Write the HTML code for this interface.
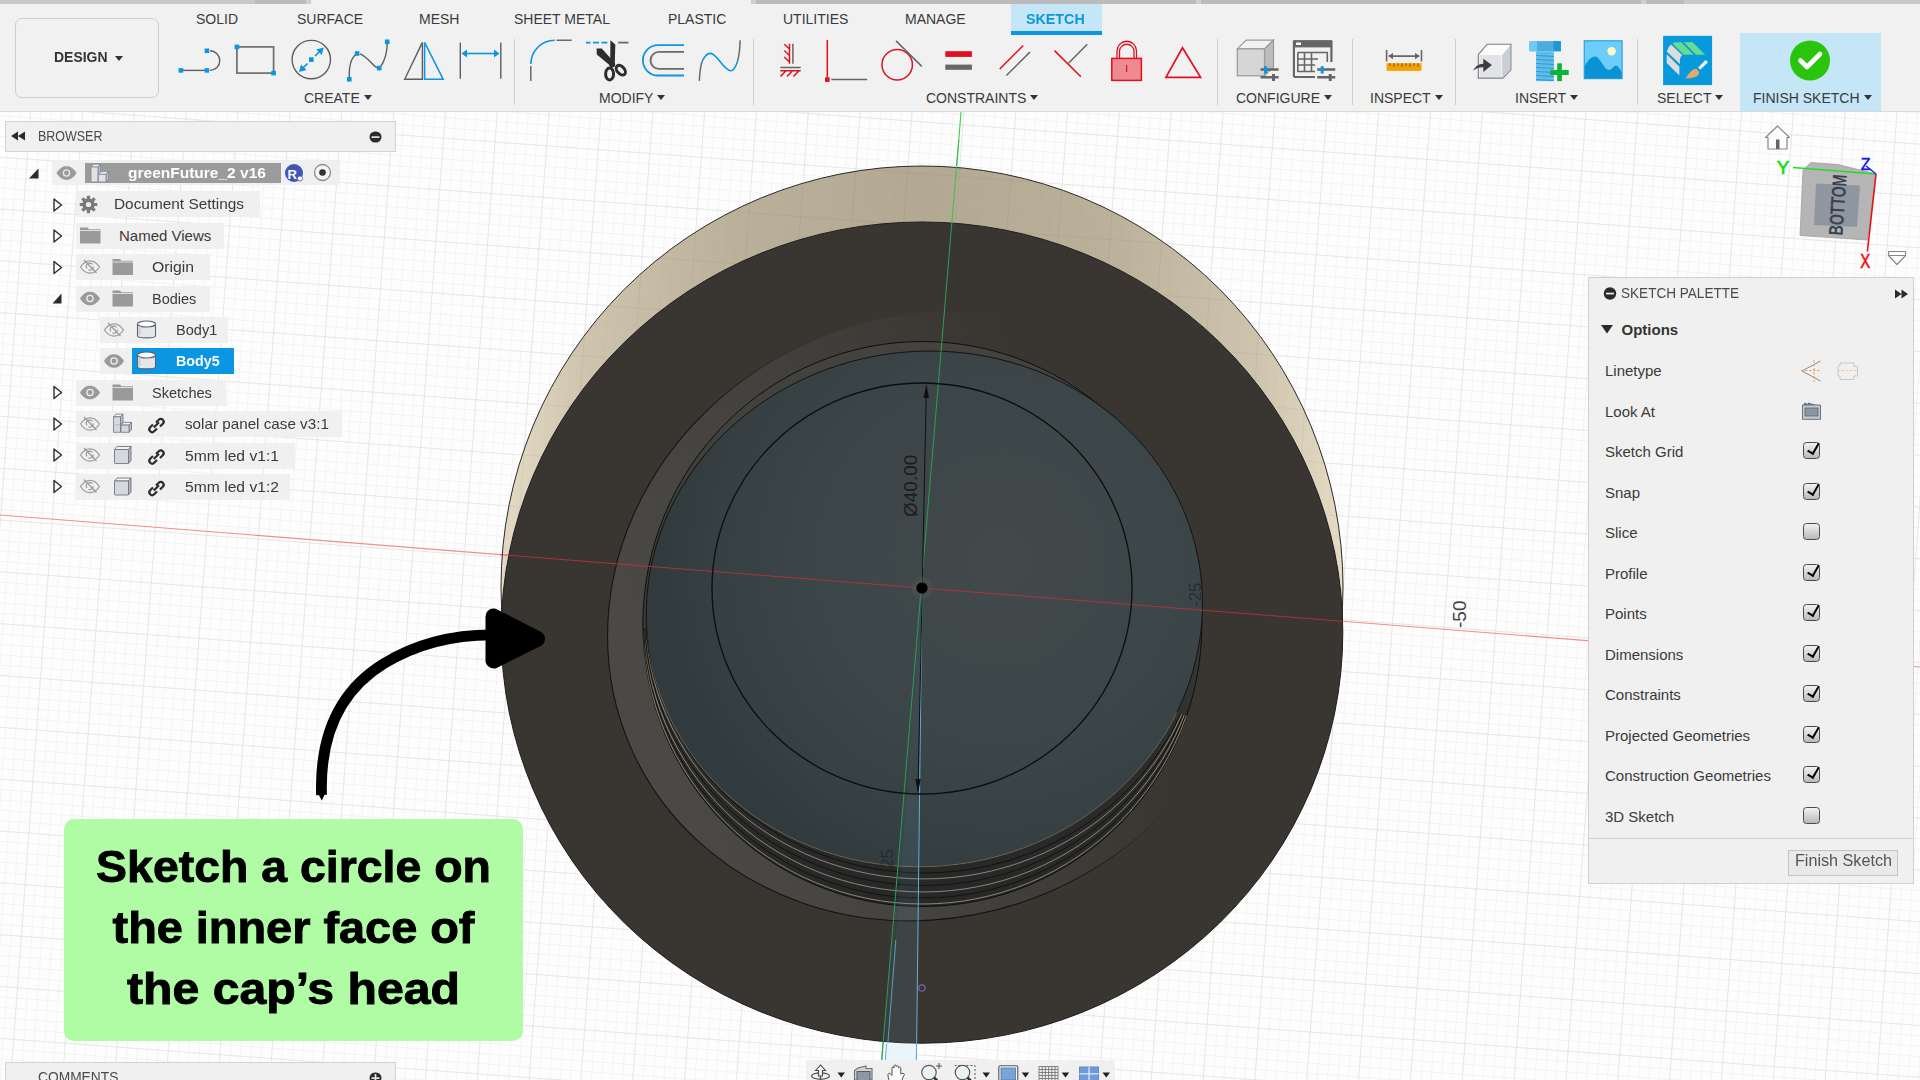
<!DOCTYPE html>
<html><head><meta charset="utf-8">
<style>
*{margin:0;padding:0;box-sizing:border-box}
html,body{width:1920px;height:1080px;overflow:hidden;background:#fdfdfd;font-family:"Liberation Sans",sans-serif;color:#3c3c3c}
.abs{position:absolute}
#scene{position:absolute;left:0;top:0}
#tb{position:absolute;left:0;top:0;width:1920px;height:112px;background:#f1f1f1;border-bottom:1px solid #d9d9d9}
.strip{position:absolute;top:0;height:4px}
.tab{position:absolute;top:11px;font-size:14px;color:#3a3a3a;white-space:nowrap;letter-spacing:0}
.grp{position:absolute;top:90px;font-size:14px;color:#3a3a3a;white-space:nowrap}
.sep{position:absolute;top:39px;width:1px;height:66px;background:#cfcfcf}
.caret{display:inline-block;width:0;height:0;border-left:4px solid transparent;border-right:4px solid transparent;border-top:5px solid #333;vertical-align:middle;margin-left:4px;position:relative;top:-2px}
.panel{position:absolute;background:#f0f0f0;border:1px solid #d6d6d6}
.row{position:absolute;height:26px;background:rgba(239,239,239,0.94)}
.txt{position:absolute;font-size:15px;color:#3a3a3a;white-space:nowrap}
.pal{position:absolute;left:1605px;font-size:15px;color:#3a3a3a;white-space:nowrap}
.cb{position:absolute;left:1803px;width:17px;height:17px;border:1.2px solid #4a4a4a;border-radius:3.5px;background:linear-gradient(#f2f2f2,#b9b9b9)}
.ck::after{content:"";position:absolute;left:5.6px;top:-1.6px;width:4.6px;height:10.8px;border-right:2.2px solid #000;border-bottom:2.2px solid #000;transform:rotate(30deg)}
</style></head><body>
<svg id="scene" width="1920" height="1080" viewBox="0 0 1920 1080">
 <defs>
  <pattern id="gmin" width="10.34" height="10.34" patternUnits="userSpaceOnUse" patternTransform="translate(928,588.4) rotate(4.25)">
   <path d="M0 0H10.34M0 0V10.34" stroke="#eaeaea" stroke-width="1" fill="none"/>
  </pattern>
  <pattern id="gmaj" width="51.7" height="51.7" patternUnits="userSpaceOnUse" patternTransform="translate(928,588.4) rotate(4.25)">
   <path d="M0 0H51.7M0 0V51.7" stroke="#dcdcdc" stroke-width="1" fill="none"/>
  </pattern>
  <pattern id="gminD" width="10.34" height="10.34" patternUnits="userSpaceOnUse" patternTransform="translate(928,588.4) rotate(4.25)">
   <path d="M0 0H10.34M0 0V10.34" stroke="#000" stroke-opacity="0.025" stroke-width="1" fill="none"/>
  </pattern>
  <pattern id="gmajD" width="51.7" height="51.7" patternUnits="userSpaceOnUse" patternTransform="translate(928,588.4) rotate(4.25)">
   <path d="M0 0H51.7M0 0V51.7" stroke="#000" stroke-opacity="0.06" stroke-width="1" fill="none"/>
  </pattern>
 </defs>
 <rect width="1920" height="1080" fill="#fdfdfd"/>
 <rect width="1920" height="1080" fill="url(#gmin)"/>
 <rect width="1920" height="1080" fill="url(#gmaj)"/>

 <defs>
  <linearGradient id="beigeG" x1="500" y1="0" x2="1343" y2="0" gradientUnits="userSpaceOnUse">
   <stop offset="0" stop-color="#e6dbc5"/><stop offset="0.1" stop-color="#cfc4ad"/><stop offset="0.28" stop-color="#bbb09a"/><stop offset="0.5" stop-color="#b3a892"/><stop offset="0.72" stop-color="#bbb09a"/><stop offset="0.9" stop-color="#cfc4ad"/><stop offset="1" stop-color="#e6dbc5"/>
  </linearGradient>
  <linearGradient id="ringG" x1="640" y1="700" x2="1080" y2="540" gradientUnits="userSpaceOnUse">
   <stop offset="0" stop-color="#4b4945"/><stop offset="0.45" stop-color="#44423e"/><stop offset="1" stop-color="#393632"/>
  </linearGradient>
  <radialGradient id="ringS" cx="660" cy="820" r="560" gradientUnits="userSpaceOnUse">
   <stop offset="0" stop-color="#111" stop-opacity="1"/><stop offset="0.72" stop-color="#111" stop-opacity="0.95"/><stop offset="0.92" stop-color="#111" stop-opacity="0"/>
  </radialGradient>
  <radialGradient id="diskG" cx="1000" cy="560" r="340" gradientUnits="userSpaceOnUse">
   <stop offset="0" stop-color="#41494b"/><stop offset="0.55" stop-color="#3c4547"/><stop offset="0.85" stop-color="#363f42"/><stop offset="1" stop-color="#313b3e"/>
  </radialGradient>
  <linearGradient id="thrG" x1="0" y1="340" x2="0" y2="906" gradientUnits="userSpaceOnUse">
   <stop offset="0" stop-color="#45433f"/><stop offset="0.45" stop-color="#3c3b38"/><stop offset="0.75" stop-color="#2b2c2b"/><stop offset="1" stop-color="#262726"/>
  </linearGradient>
  <linearGradient id="fadeL" x1="0" y1="622" x2="0" y2="700" gradientUnits="userSpaceOnUse"><stop offset="0" stop-color="#fff" stop-opacity="0"/><stop offset="1" stop-color="#fff" stop-opacity="1"/></linearGradient>
  <mask id="lowMask" maskUnits="userSpaceOnUse" x="0" y="0" width="1920" height="1080"><rect x="0" y="622" width="1920" height="458" fill="url(#fadeL)"/></mask>
  <clipPath id="lowHalf"><path d="M0 628H922L1260 740V1080H0Z"/></clipPath>
 </defs>
 <path d="M0 515L1920 667" stroke="#f28d8d" stroke-width="1.1"/>
 <path d="M958.8 140L961 112M958.8 140L880 1080" stroke="#3ccf4a" stroke-width="1.1"/>
 <circle cx="922" cy="587" r="421" fill="url(#beigeG)" stroke="#2a2a2a" stroke-width="1"/>
 <circle cx="922" cy="587" r="420" fill="url(#gmajD)"/>
 <circle cx="922" cy="587" r="420" fill="url(#gminD)"/>
 <path d="M958.8 140L951.9 222" stroke="#3fbf50" stroke-width="1.1"/>
 <ellipse cx="922" cy="632.6" rx="420.8" ry="410.6" fill="#393632" stroke="#1e1e1e" stroke-width="1"/>
 <path d="M1231.00 485.75A327.4 300 -23.5 1 0 630.50 746.85A327.4 300 -23.5 1 0 1231.00 485.75Z" fill="url(#ringG)" stroke="url(#ringS)" stroke-width="1.1"/>
 <ellipse cx="922.4" cy="624" rx="279.5" ry="282.5" fill="url(#thrG)" stroke="#0e0e0e" stroke-width="1"/>
 <g fill="none" stroke="#121212" stroke-width="1" clip-path="url(#lowHalf)">
  <ellipse cx="924.07" cy="611.35" rx="278.66" ry="261.56"/>
  <ellipse cx="923.45" cy="616.07" rx="278.98" ry="269.38"/>
  <ellipse cx="922.82" cy="620.79" rx="279.29" ry="277.19"/>
 </g>
 <g fill="none" stroke="#bfb296" stroke-width="0.9" clip-path="url(#lowHalf)" mask="url(#lowMask)" opacity="0.75">
  <ellipse cx="923.77" cy="613.62" rx="278.81" ry="265.31"/>
  <ellipse cx="923.12" cy="618.53" rx="279.14" ry="273.44"/>
  <ellipse cx="922.52" cy="623.06" rx="279.44" ry="280.94"/>
 </g>
 <path d="M1200.52 572.55A278.5 257.5 -7.5 1 0 648.28 645.25A278.5 257.5 -7.5 1 0 1200.52 572.55Z" fill="url(#diskG)" stroke="#121212" stroke-width="1"/>
 <path d="M1200.52 572.55A278.5 257.5 -7.5 1 0 648.28 645.25A278.5 257.5 -7.5 1 0 1200.52 572.55Z" fill="none" stroke="#bfb296" stroke-width="0.9" clip-path="url(#lowHalf)" mask="url(#lowMask)" opacity="0.6"/>
 <path d="M500 554.6L1343 621.3" stroke="#c8303c" stroke-width="1" opacity="0.8"/>
 <path d="M922 588L916.7 1080L885.5 1080L895.8 940" fill="#b8d8ee" opacity="0.035"/>
 <path d="M904.1 793L918.5 793L916.2 1043L883.1 1043Z" fill="#6ab8e6" opacity="0.07"/>
 <path d="M895.8 940L885 1080" stroke="#5fb0dd" stroke-width="1" opacity="0.85"/>
 <path d="M951.9 222L880 1080" stroke="#2a9e58" stroke-width="1"/>
 <rect x="886" y="1044" width="30" height="20" fill="#eaf4fb"/>
 <path d="M922 588L916.2 1080" stroke="#5fb0dd" stroke-width="1"/>
 <path d="M886.5 1044L885 1064M916.5 1044L916.3 1064" stroke="#5fb0dd" stroke-width="1"/>
 <ellipse cx="922" cy="588.5" rx="210" ry="205.5" fill="none" stroke="#0d0d0d" stroke-width="1.3"/>
 <path d="M926.4 386L918 791" stroke="#111" stroke-width="1"/>
 <path d="M926.4 384L923.6 398L929 398Z M918 793L915.4 779L920.8 779Z" fill="#111"/>
 <circle cx="922" cy="588" r="11" fill="#555" opacity="0.45"/>
 <circle cx="922" cy="588" r="5.6" fill="#000"/>
 <circle cx="922" cy="988" r="3.2" fill="none" stroke="#7d5fa8" stroke-width="1.2"/>
 <text transform="translate(916.5,517) rotate(-90)" font-family="Liberation Sans" font-size="19" fill="#1c1c1c">&#216;40.00</text>
 <text transform="translate(1200.5,607) rotate(-90)" font-family="Liberation Sans" font-size="17" fill="#22292b" opacity="0.8">-25</text>
 <text transform="translate(893,868) rotate(-90)" font-family="Liberation Sans" font-size="17" fill="#22292b" opacity="0.8">25</text>
 <text transform="translate(1466,628) rotate(-90)" font-family="Liberation Sans" font-size="19" fill="#444">-50</text>
</svg>

<div id="tb">
 <div class="strip" style="left:0;width:255px;background:#c8c8c8"></div>
 <div class="strip" style="left:255px;width:51px;background:#bbbbbb"></div>
 <div class="strip" style="left:306px;width:5px;background:#cfcfcf"></div>
 <div class="strip" style="left:751px;width:5px;background:#cfcfcf"></div>
 <div class="strip" style="left:756px;width:440px;background:#bbbbbb"></div>
 <div class="strip" style="left:1196px;width:5px;background:#cfcfcf"></div>
 <div class="strip" style="left:1201px;width:440px;background:#bbbbbb"></div>
 <div class="strip" style="left:1641px;width:5px;background:#cfcfcf"></div>
 <div class="strip" style="left:1646px;width:38px;background:#bbbbbb"></div>
 <div class="strip" style="left:1684px;width:236px;background:#c8c8c8"></div>

 <div class="abs" style="left:15px;top:18px;width:144px;height:80px;border:1px solid #cdcdcd;border-radius:7px"></div>
 <div class="abs" style="left:53.5px;top:48px;font-size:15px;font-weight:bold;color:#333;transform:scaleX(0.93);transform-origin:left">DESIGN</div>
 <div class="abs" style="left:115px;top:55.5px;width:0;height:0;border-left:4px solid transparent;border-right:4px solid transparent;border-top:5.5px solid #333"></div>

 <div class="tab" style="left:196px">SOLID</div>
 <div class="tab" style="left:297px">SURFACE</div>
 <div class="tab" style="left:419px">MESH</div>
 <div class="tab" style="left:514px">SHEET METAL</div>
 <div class="tab" style="left:668px">PLASTIC</div>
 <div class="tab" style="left:783px">UTILITIES</div>
 <div class="tab" style="left:905px">MANAGE</div>
 <div class="abs" style="left:1011px;top:4px;width:91px;height:31px;background:#c5e6f6;border-bottom:4px solid #0a96e2"></div>
 <div class="tab" style="left:1025.8px;color:#0a96e2;font-weight:bold;transform:scaleX(1.02);transform-origin:left">SKETCH</div>

 <div class="abs" style="left:1740px;top:33px;width:141px;height:78px;background:#c5e6f6"></div>

 <div class="grp" style="left:304px">CREATE<span class="caret"></span></div>
 <div class="grp" style="left:599px">MODIFY<span class="caret"></span></div>
 <div class="grp" style="left:926px">CONSTRAINTS<span class="caret"></span></div>
 <div class="grp" style="left:1236px">CONFIGURE<span class="caret"></span></div>
 <div class="grp" style="left:1370px">INSPECT<span class="caret"></span></div>
 <div class="grp" style="left:1515px">INSERT<span class="caret"></span></div>
 <div class="grp" style="left:1657px">SELECT<span class="caret"></span></div>
 <div class="grp" style="left:1753px">FINISH SKETCH<span class="caret"></span></div>

 
<svg class="abs" style="left:0;top:0" width="1920" height="112" viewBox="0 0 1920 112">
 <g fill="none" stroke="#5e5e5e" stroke-width="1.4">
  <path d="M183 70.4H205"/>
  <path d="M210 50.8A9.8 9.8 0 0 1 210 70.4"/>
  <rect x="236.9" y="46.9" width="36.7" height="26.2" stroke="#6e6e6e" stroke-width="1.7"/>
  <circle cx="311.3" cy="59.6" r="19.2"/>
  <path d="M349.3 77C349 66 351 58 356 54.5M360 53.8C368 57 373 66 377 67.5M381 66C385 60 387 53 387.2 44"/>
  <path d="M404.7 79.3L422.4 42.4V79.3Z"/>
  <path d="M424.6 42.4L443.2 79.3H424.6Z" stroke="#0a96e2" stroke-width="1.5"/>
  <path d="M460.3 42.4V78.7M500.8 42.4V78.7"/>
 </g>
 <g fill="#0a96e2">
  <rect x="178.6" y="68.1" width="4.6" height="4.6"/><rect x="204.6" y="68.1" width="4.6" height="4.6"/><rect x="204.6" y="48.5" width="4.6" height="4.6"/>
  <rect x="234.6" y="44.6" width="4.6" height="4.6"/><rect x="271.3" y="70.8" width="4.6" height="4.6"/>
  <rect x="309" y="57.3" width="4.6" height="4.6"/>
  <rect x="347" y="77" width="4.6" height="4.6"/><rect x="354.8" y="51.2" width="4.6" height="4.6"/><rect x="376.9" y="65.8" width="4.6" height="4.6"/><rect x="384.9" y="39.5" width="4.6" height="4.6"/>
  <path d="M299 72L301 64.5L306.5 70Z M323.8 47.5L316.3 49.5L321.8 55Z"/>
  <path d="M461.5 53.5L467 49.5V57.5Z M499.5 53.5L494 49.5V57.5Z"/>
 </g>
 <g fill="none" stroke="#0a96e2" stroke-width="1.6">
  <path d="M303 68L307.5 63.5M315 56L320 51"/>
  <path d="M465 53.5H495"/>
  <path d="M530.8 64.1A24 24 0 0 1 554.7 40.2"/>
  <path d="M586 42.6H590.5M593 42.6H599M601.5 42.6H607.4" stroke-width="1.8"/>
  <path d="M684 45.2H658A15.15 15.15 0 0 0 658 75.5H684" stroke-width="1.8"/>
  <path d="M702 61.7C705 55 707.5 53.4 710.4 53.4C717 53.4 724 70.7 730.8 70.7C734 70.7 736 66 737.4 61.7"/>
 </g>
 <g fill="none" stroke="#6a6a6a" stroke-width="1.5">
  <path d="M556.5 40.2H571.7M530.8 66V80.9"/>
  <path d="M618.2 42.6H628.4" stroke-width="1.8"/>
  <path d="M684 51.9H659A8.5 8.5 0 0 0 659 68.9H684" stroke-width="1.8"/>
  <path d="M699.3 80.9C699.8 72 700.5 66 702 61.7M737.4 61.7C739 56 740 48 740.1 40.2"/>
 </g>
 <g fill="#2d2d2d">
  <path d="M610.4 40.2L615.3 44.6L614.8 63.5L610.2 62Z"/>
  <path d="M596.6 48.6L601.8 48.4L613.5 61.5L609.8 65.2L596.8 54.5Z"/>
  <circle cx="612.2" cy="64.6" r="3"/>
 </g>
 <g fill="none" stroke="#2d2d2d" stroke-width="3">
  <ellipse cx="609.6" cy="74" rx="4" ry="6"/>
  <ellipse cx="620.8" cy="70.2" rx="3.6" ry="5.6" transform="rotate(-42 620.8 70.2)"/>
 </g>
 <g fill="none" stroke="#e0101f" stroke-width="1.5">
  <path d="M789.5 43.7V63.8M784.3 44.3L789.5 49M784.3 50.5L789.5 55.5M784.3 57L789.5 62"/>
  <path d="M780.3 70.7H800.7M786 70.7L780.5 76.4M792.5 70.7L787 76.4M799 70.7L793.5 76.4"/>
  <path d="M827.3 40V77.5"/>
  <circle cx="897.2" cy="64.7" r="15.2"/>
  <path d="M999.7 69L1023.2 45.5"/>
  <path d="M1054.5 50.6L1080.9 76.75"/>
  <path d="M1165.9 77.3L1182.5 47.8L1200.6 77.3Z" stroke-width="1.7"/>
 </g>
 <g fill="none" stroke="#666" stroke-width="1.5">
  <path d="M792.9 43.7V63.8M780.3 67.6H800.7"/>
  <path d="M831.3 79.6H867.2"/>
  <path d="M896 40.9L921.8 66.4"/>
  <path d="M1006.4 75.5L1029.9 52.1"/>
  <path d="M1068.5 63.2L1087.2 44.3"/>
 </g>
 <rect x="825" y="77.3" width="4.6" height="4.6" fill="#e0101f"/>
 <rect x="945.3" y="51.2" width="26.6" height="5.7" fill="#e0101f"/>
 <rect x="945.3" y="64.6" width="26.6" height="5.2" fill="#666"/>
 <g stroke="#e0101f" stroke-width="1.5">
  <rect x="1111.8" y="58.4" width="29.6" height="22" fill="#ee8a91"/>
  <path d="M1117 58V51A9.6 9.6 0 0 1 1136.5 51V58M1119.5 58V51.5A7.2 7.2 0 0 1 1134 51.5V58" fill="none" stroke-width="1.3"/>
  <path d="M1126.6 65V72" stroke-width="1.2"/>
 </g>
 <!-- configure -->
 <path d="M1237.3 48.9L1246.2 40.1H1273.5L1264.5 48.9Z" fill="#f2f2f2" stroke="#9a9a9a" stroke-width="1.2"/>
 <path d="M1264.5 48.9L1273.5 40.1V67L1264.5 75.8Z" fill="#bcbcbc" stroke="#9a9a9a" stroke-width="1.2"/>
 <rect x="1237.3" y="48.9" width="27.2" height="26.9" fill="#d6d6d6" stroke="#9a9a9a" stroke-width="1.2"/>
 <g fill="none" stroke="#666" stroke-width="2.2">
  <path d="M1293.9 41V77M1293.9 77H1315M1331.4 41V62"/>
  <path d="M1297.8 52.5H1327.3V62M1297.8 52.5V71.5H1315M1297.8 59H1318M1297.8 65H1315M1304.5 52.5V71.5M1311.5 52.5V71.5" stroke-width="1.6"/>
 </g>
 <rect x="1293.2" y="40.1" width="38.9" height="7.3" fill="#666"/>
 <rect x="1296" y="42.5" width="5" height="2.5" fill="#fff"/>
 <g id="sl">
  <path d="M1260.5 69.5H1278.6M1260.5 77.3H1278.6" stroke="#666" stroke-width="2.6"/>
  <rect x="1264" y="66.2" width="3" height="7.3" fill="#0a96e2"/>
  <rect x="1272" y="74" width="3" height="7" fill="#666"/>
 </g>
 <use href="#sl" x="56.7"/>
 <g stroke="#666" stroke-width="1.6" fill="none">
  <path d="M1386.6 50V61.5M1421.5 50V61.5M1389 56.1H1419"/>
 </g>
 <path d="M1388 56.1L1393 53V59.2Z M1420 56.1L1415 53V59.2Z" fill="#666"/>
 <rect x="1386.6" y="63.2" width="34.9" height="7.7" fill="#f5a100"/>
 <path d="M1390 63.2V66M1394 63.2V67M1398 63.2V66M1402 63.2V67M1406 63.2V66M1410 63.2V67M1414 63.2V66M1418 63.2V67" stroke="#7a5a20" stroke-width="1"/>
 <!-- insert -->
 <path d="M1478.3 54.7L1487.2 44.25H1510.9V69.8L1502.8 78.1H1478.3Z" fill="#fbfbfb" stroke="#7a7c80" stroke-width="1.1"/>
 <path d="M1502.2 55L1510.2 45.5V69.5L1502.2 77.5Z" fill="#c9cdd5"/>
 <rect x="1479.4" y="55" width="22" height="22" fill="#e2e3e7"/>
 <path d="M1473.1 70.8C1475.5 66 1479 64 1483.3 63.8V58.8L1491.9 65.1L1483.3 71.9V67.3C1479 67 1476 68.5 1473.1 70.8Z" fill="#3a3d42"/>
 <path d="M1529.4 41.1H1560.9V51.3H1529.4Z" fill="#4aacdf"/>
 <path d="M1529.4 42.5Q1529.4 41.1 1531 41.1H1537V51.3H1529.4Z" fill="#70c8f6"/>
 <path d="M1553.5 41.1H1559.5Q1560.9 41.1 1560.9 42.5V51.3H1553.5Z" fill="#1f97d5"/>
 <rect x="1536.1" y="51.3" width="17.8" height="29.9" fill="#5fbcec"/>
 <path d="M1536 55.5L1553.9 56.5M1536 59.5L1553.9 60.5M1536 63.5L1553.9 64.5M1536 67.5L1553.9 68.5M1536 71.5L1553.9 72.5M1536 75.5L1553.9 76.5M1536 79.5L1553.9 80.5" stroke="#3496cc" stroke-width="1.1"/>
 <rect x="1557.2" y="63.3" width="4.7" height="17.9" fill="#0db43c"/>
 <rect x="1550.2" y="70" width="18.5" height="5" fill="#0db43c"/>
 <rect x="1584.2" y="40.8" width="37.9" height="37.9" fill="#6ccdfb" stroke="#1a94d6" stroke-width="1"/>
 <path d="M1584.7 78.2V66C1588 60 1592 56.5 1595 56.5C1600 56.5 1604 70 1609 70C1612 70 1614 65.5 1615.5 65.5C1618 65.5 1620 69 1621.6 72V78.2Z" fill="#0a93d4"/>
 <circle cx="1611.6" cy="51.3" r="4.2" fill="#fffbc4"/>
 <!-- select -->
 <rect x="1663.1" y="35.85" width="49" height="49.25" fill="#0899dc"/>
 <path d="M1672.4 43.6Q1674 42.3 1676.5 42.3H1681.3L1693.7 54.8H1683.8Z" fill="#66dc92"/>
 <path d="M1683.6 42.3H1692.7L1705.1 54.8H1696Z" fill="#66dc92"/>
 <path d="M1666.7 51.4Q1668 46.5 1671.1 44.4L1682.3 55.3Q1680 56.5 1679.9 59.5V64.1Z" fill="#dcdcdc"/>
 <path d="M1666.7 54.3L1679.4 66.7V75.5L1666.7 63.1Z" fill="#dcdcdc"/>
 <path d="M1698.1 67.5L1705.6 60L1708 62.3L1700.2 69.8Z" fill="#f2f2f2"/>
 <path d="M1685.4 78.6Q1689 73 1692.1 70.3Q1694.5 68.5 1696.3 68.8L1698.9 71.4Q1699.5 74 1697.8 75.5Q1695 78 1685.4 78.6Z" fill="#e5a866"/>
 <circle cx="1810" cy="60.5" r="20" fill="#2ac40c"/>
 <path d="M1800.5 60.5L1807 67L1820 54" fill="none" stroke="#fff" stroke-width="4.6" stroke-linecap="round" stroke-linejoin="round"/>
</svg>

 <div class="sep" style="left:514px"></div>
 <div class="sep" style="left:753px"></div>
 <div class="sep" style="left:1217px"></div>
 <div class="sep" style="left:1352px"></div>
 <div class="sep" style="left:1455px"></div>
 <div class="sep" style="left:1637px"></div>
</div>


<!-- BROWSER -->
<div class="panel" style="left:5px;top:121px;width:391px;height:31px;border-color:#d3d3d3"></div>
<svg class="abs" style="left:10px;top:130px" width="18" height="12" viewBox="0 0 18 12"><path d="M1 6L8 1.5V10.5Z M8 6L15 1.5V10.5Z" fill="#2b2b2b"/></svg>
<div class="txt" style="left:38px;top:128px;font-size:14.5px;color:#4a4a4a;transform:scaleX(0.86);transform-origin:left">BROWSER</div>
<svg class="abs" style="left:368px;top:130px" width="16" height="14" viewBox="0 0 16 14"><rect x="1.5" y="1.5" width="12" height="11" rx="5.5" fill="#2b2b2b"/><rect x="3.5" y="6.3" width="8" height="1.6" fill="#f0f0f0"/></svg>

<div class="row" style="left:52px;top:160px;width:288px;height:25px"></div>
<div class="abs" style="left:85px;top:163px;width:196px;height:20px;background:#9b9b9b"></div>
<svg class="abs" style="left:0;top:150px" width="400" height="360" viewBox="0 150 400 360">
 <path d="M29 178.5L38.5 168.5V178.5Z" fill="#2b2b2b"/>
 <g id="eye"><path d="M56.5 173C59.5 168 63 166.2 66.5 166.2C70 166.2 73.5 168 76.5 173C73.5 178 70 179.8 66.5 179.8C63 179.8 59.5 178 56.5 173Z" fill="#9a9a9a"/><circle cx="66.5" cy="173" r="3.8" fill="#e9e9e9"/><circle cx="66.5" cy="173" r="2.4" fill="#9a9a9a"/></g>
 <g stroke="#7d838c" stroke-width="0.8" stroke-linejoin="round">
  <path d="M91 167L93.5 164.3H100.5L98 167Z" fill="#f4f5f7"/><path d="M98 167L100.5 164.3V172L98 174.5Z" fill="#b9c0c9"/><rect x="91" y="167" width="7" height="15" fill="#dfe3e8"/>
  <path d="M98.3 174.3L101 171.6H108.6L106 174.3Z" fill="#f4f5f7"/><path d="M106 174.3L108.6 171.6V179.3L106 182Z" fill="#b9c0c9"/><rect x="98.3" y="174.3" width="7.7" height="7.7" fill="#dfe3e8"/>
 </g>
 <circle cx="294" cy="173" r="9" fill="#3f55b8"/>
 <text x="287.5" y="178.5" font-family="Liberation Sans" font-weight="bold" font-size="13" fill="#fff">R</text>
 <circle cx="300" cy="178.5" r="2.6" fill="#fff" stroke="#3f55b8" stroke-width="0.8"/>
 <circle cx="322.5" cy="172.5" r="8" fill="#f4f4f4" stroke="#8a8a8a" stroke-width="1.3"/>
 <circle cx="322.5" cy="172.5" r="3.3" fill="#333"/>
</svg>
<div class="txt" style="left:128px;top:164px;font-weight:bold;color:#fff;font-size:15px;transform:scaleX(1.034);transform-origin:left">greenFuture_2 v16</div>

<div class="row" style="left:76px;top:191px;width:184px"></div>
<div class="row" style="left:76px;top:222.5px;width:148px"></div>
<div class="row" style="left:76px;top:254px;width:134px"></div>
<div class="row" style="left:76px;top:285.5px;width:134px"></div>
<div class="row" style="left:100px;top:317px;width:128px"></div>
<div class="row" style="left:100px;top:348px;width:132px"></div>
<div class="abs" style="left:132px;top:348px;width:102px;height:26px;background:#0a96e2"></div>
<div class="row" style="left:76px;top:379.5px;width:150px"></div>
<div class="row" style="left:76px;top:411px;width:266px"></div>
<div class="row" style="left:76px;top:442.5px;width:219px"></div>
<div class="row" style="left:76px;top:474px;width:214px"></div>

<svg class="abs" style="left:0;top:180px" width="400" height="330" viewBox="0 180 400 330">
 <defs>
  <g id="tri"><path d="M0 0L7.5 6L0 12Z" fill="none" stroke="#2b2b2b" stroke-width="1.4" stroke-linejoin="round"/></g>
  <g id="fold"><path d="M0 1.5H7.5L9 3.3H20.5V17.5H0Z" fill="#9a9a9a"/><path d="M0 4.5H20.5" stroke="#f0f0f0" stroke-width="0.8"/></g>
  <g id="eyeo"><path d="M0 7C3 2 6.5 0.2 10 0.2C13.5 0.2 17 2 20 7C17 12 13.5 13.8 10 13.8C6.5 13.8 3 12 0 7Z" fill="#9a9a9a"/><circle cx="10" cy="7" r="3.8" fill="#ececec"/><circle cx="10" cy="7" r="2.4" fill="#9a9a9a"/></g>
  <g id="eyeh" fill="none" stroke="#9a9a9a" stroke-width="1.2"><path d="M0.5 7C3.5 2.5 6.5 0.8 10 0.8C13.5 0.8 16.5 2.5 19.5 7C16.5 11.5 13.5 13.2 10 13.2C6.5 13.2 3.5 11.5 0.5 7Z"/><path d="M7 8.5A3.2 3.2 0 0 1 12.5 4.5M13.2 6.5A3.2 3.2 0 0 1 8.5 9.8"/><path d="M4 0L16.5 13" stroke-width="1.3"/></g>
  <g id="cyl"><path d="M1 4V16C1 18.5 19 18.5 19 16V4" fill="#e4e6e9" stroke="#5f646c" stroke-width="1.1"/><ellipse cx="10" cy="4" rx="9" ry="3" fill="#fbfbfb" stroke="#5f646c" stroke-width="1.1"/><path d="M3 6V15" stroke="#c8ccd2" stroke-width="2"/></g>
  <g id="link" fill="none" stroke="#2b2b2b" stroke-width="2.2"><path d="M7 9.5L4.2 12.3A2.8 2.8 0 0 0 8.2 16.3L11 13.5"/><path d="M10 7.5L12.8 4.7A2.8 2.8 0 0 1 16.8 8.7L14 11.5"/><path d="M7.8 12.5L13 7.3"/></g>
  <g id="box" stroke="#6f757e" stroke-width="0.9" stroke-linejoin="round"><path d="M0.5 3.5L3 0.5H17L14.5 3.5Z" fill="#f3f4f6"/><path d="M14.5 3.5L17 0.5V14.5L14.5 17.5Z" fill="#aeb5bf"/><rect x="0.5" y="3.5" width="14" height="14" rx="0.8" fill="#d4d9e0"/></g>
  <g id="comp" stroke="#6f757e" stroke-width="0.8" stroke-linejoin="round"><path d="M0.5 3L3 0.3H10L7.5 3Z" fill="#f3f4f6"/><path d="M7.5 3L10 0.3V8.5L7.5 11Z" fill="#b9c0c9"/><rect x="0.5" y="3" width="7" height="15.5" fill="#d4d9e0"/><path d="M8 11.3L10.6 8.6H18.5L16 11.3Z" fill="#f3f4f6"/><path d="M16 11.3L18.5 8.6V16L16 18.5Z" fill="#b9c0c9"/><rect x="8" y="11.3" width="8" height="7.2" fill="#d4d9e0"/><path d="M0.5 11H7.5" stroke="#a9b0b9"/></g>
 </defs>
 <use href="#tri" x="54" y="199"/>
 <g transform="translate(88.5,204.5)" fill="#7a7a7a"><circle r="6.2"/><g stroke="#7a7a7a" stroke-width="3.2"><path d="M0 -8.8V8.8M-8.8 0H8.8M-6.2 -6.2L6.2 6.2M-6.2 6.2L6.2 -6.2"/></g><circle r="2.6" fill="#ececec"/></g>
 <use href="#tri" x="54" y="230"/>
 <use href="#fold" x="80" y="226"/>
 <use href="#tri" x="54" y="261.5"/>
 <use href="#eyeh" x="80" y="260"/>
 <use href="#fold" x="112.5" y="257.5"/>
 <path d="M52.5 303.5L61.5 293.5V303.5Z" fill="#2b2b2b"/>
 <use href="#eyeo" x="80" y="291.5"/>
 <use href="#fold" x="112.5" y="289"/>
 <use href="#eyeh" x="104" y="323"/>
 <use href="#cyl" x="136.5" y="320"/>
 <use href="#eyeo" x="104" y="354"/>
 <use href="#cyl" x="136.5" y="351"/>
 <use href="#tri" x="54" y="386.5"/>
 <use href="#eyeo" x="80" y="385.5"/>
 <use href="#fold" x="112.5" y="383"/>
 <use href="#tri" x="54" y="418"/>
 <use href="#eyeh" x="80" y="417"/>
 <use href="#comp" x="113" y="413.8"/>
 <use href="#link" x="146" y="415"/>
 <use href="#tri" x="54" y="449"/>
 <use href="#eyeh" x="80" y="448"/>
 <use href="#box" x="114" y="446"/>
 <use href="#link" x="146" y="446.5"/>
 <use href="#tri" x="54" y="480.5"/>
 <use href="#eyeh" x="80" y="479.5"/>
 <use href="#box" x="114" y="477.5"/>
 <use href="#link" x="146" y="478"/>
</svg>
<div class="txt" style="left:114px;top:195px;transform:scaleX(1.026);transform-origin:left">Document Settings</div>
<div class="txt" style="left:119px;top:226.5px">Named Views</div>
<div class="txt" style="left:151.5px;top:258px;transform:scaleX(1.05);transform-origin:left">Origin</div>
<div class="txt" style="left:152px;top:289.5px;transform:scaleX(0.965);transform-origin:left">Bodies</div>
<div class="txt" style="left:175.5px;top:321px;transform:scaleX(0.97);transform-origin:left">Body1</div>
<div class="txt" style="left:175.5px;top:352px;color:#fff;font-weight:bold;transform:scaleX(0.95);transform-origin:left">Body5</div>
<div class="txt" style="left:151.5px;top:383.5px;transform:scaleX(0.97);transform-origin:left">Sketches</div>
<div class="txt" style="left:185px;top:415px;transform:scaleX(1.015);transform-origin:left">solar panel case v3:1</div>
<div class="txt" style="left:185px;top:446.5px;transform:scaleX(1.044);transform-origin:left">5mm led v1:1</div>
<div class="txt" style="left:185px;top:478px;transform:scaleX(1.044);transform-origin:left">5mm led v1:2</div>

<!-- COMMENTS -->
<div class="panel" style="left:5px;top:1062px;width:391px;height:30px;border-color:#d3d3d3"></div>
<div class="txt" style="left:38px;top:1069px;font-size:14.5px;color:#4a4a4a;transform:scaleX(0.95);transform-origin:left">COMMENTS</div>
<svg class="abs" style="left:368px;top:1071px" width="16" height="14" viewBox="0 0 16 14"><rect x="1.5" y="1.5" width="12" height="11" rx="5.5" fill="#2b2b2b"/><rect x="3.5" y="6.3" width="8" height="1.6" fill="#f0f0f0"/><rect x="6.7" y="3" width="1.6" height="8" fill="#f0f0f0"/></svg>


<!-- SKETCH PALETTE -->
<div class="panel" style="left:1588px;top:277px;width:326px;height:32px;border-color:#d0d0d0"></div>
<div class="panel" style="left:1588px;top:308px;width:326px;height:531px;border-color:#d0d0d0;border-top:none"></div>
<div class="panel" style="left:1588px;top:838px;width:326px;height:46px;border-color:#d0d0d0"></div>
<svg class="abs" style="left:1600px;top:285px" width="320" height="560" viewBox="1600 285 320 560">
 <circle cx="1610" cy="293.5" r="6.2" fill="#2b2b2b"/><rect x="1606" y="292.7" width="8" height="1.7" fill="#f0f0f0"/>
 <path d="M1895 289.5L1901.5 294L1895 298.5Z M1901.5 289.5L1908 294L1901.5 298.5Z" fill="#2b2b2b"/>
 <path d="M1601 325L1613 325L1607 333.5Z" fill="#2b2b2b"/>
 <g stroke="#8a8a8a" stroke-width="1" fill="none"><path d="M1820.5 361L1802 371L1820.5 381"/></g>
 <g stroke="#f0a060" stroke-width="1.1" fill="none" stroke-dasharray="2.5 1.5"><path d="M1801 370.5H1821M1814 360V382"/></g>
 <g stroke="#c8c8c8" stroke-width="1" fill="none"><path d="M1840 363H1854V366.5H1857.5V376H1854V379.5H1840V376H1838V366H1840Z"/></g>
 <path d="M1838 370.5H1858" stroke="#f5c49c" stroke-width="1" stroke-dasharray="2.5 1.5"/>
 <path d="M1802.5 405H1820.5V419.3H1802.5Z" fill="#c5cbd3" stroke="#6b7079" stroke-width="1"/>
 <rect x="1805" y="408" width="13" height="8" fill="#8a94a3" stroke="#5a6270" stroke-width="0.8"/>
 <path d="M1803.5 405L1804.5 402.5L1808 404V402.5L1815 404.5V405" fill="#6b7079"/>
</svg>
<div class="pal" style="left:1621px;top:285px;font-size:14.5px;color:#4a4a4a;transform:scaleX(0.935);transform-origin:left">SKETCH PALETTE</div>
<div class="pal" style="left:1621.5px;top:321px;font-weight:bold;color:#333">Options</div>
<div class="pal" style="top:362px">Linetype</div>
<div class="pal" style="top:402.5px">Look At</div>
<div class="pal" style="top:443px">Sketch Grid</div>
<div class="pal" style="top:483.5px">Snap</div>
<div class="pal" style="top:524px">Slice</div>
<div class="pal" style="top:564.5px">Profile</div>
<div class="pal" style="top:605px">Points</div>
<div class="pal" style="top:645.5px">Dimensions</div>
<div class="pal" style="top:686px">Constraints</div>
<div class="pal" style="top:726.5px">Projected Geometries</div>
<div class="pal" style="top:767px">Construction Geometries</div>
<div class="pal" style="top:807.5px">3D Sketch</div>
<div class="cb ck" style="top:442px"></div>
<div class="cb ck" style="top:482.5px"></div>
<div class="cb" style="top:523px"></div>
<div class="cb ck" style="top:563.5px"></div>
<div class="cb ck" style="top:604px"></div>
<div class="cb ck" style="top:644.5px"></div>
<div class="cb ck" style="top:685px"></div>
<div class="cb ck" style="top:725.5px"></div>
<div class="cb ck" style="top:766px"></div>
<div class="cb" style="top:806.5px"></div>
<div class="abs" style="left:1788px;top:850px;width:110px;height:26px;border:1px solid #c4c4c4;background:#e9e9e9"></div>
<div class="pal" style="left:1794.5px;top:852px;color:#555;font-size:16px;transform:scaleX(1.01);transform-origin:left">Finish Sketch</div>

<!-- VIEWCUBE -->
<svg class="abs" style="left:1750px;top:120px" width="170" height="160" viewBox="1750 120 170 160">
 <path d="M1765.5 137.5L1777.5 126L1789.5 137.5H1787V149H1768V137.5Z" fill="#fdfdfd" stroke="#888" stroke-width="1.2" stroke-linejoin="round"/>
 <rect x="1776" y="139.5" width="3.5" height="9.5" fill="#666"/>
 <path d="M1803 170L1811 162.5L1838 164.5L1876 174L1867.5 240L1800 235.5Z" fill="#b5b5b5" stroke="#a0a0a0" stroke-width="0.8"/>
 <path d="M1816 183.5L1860 185.5L1857 227L1814 225Z" fill="#8f96a0"/>
 <text transform="translate(1842.5,235.8) rotate(-86)" font-family="Liberation Sans" font-weight="bold" font-size="20" fill="#3a4250" textLength="61" lengthAdjust="spacingAndGlyphs">BOTTOM</text>
 <path d="M1793 167.5L1876 174" stroke="#22dd22" stroke-width="1.6"/>
 <path d="M1876 174L1867.4 251.5" stroke="#ee1111" stroke-width="1.6"/>
 <path d="M1866 166L1876 174" stroke="#2222ee" stroke-width="1.6"/>
 <text x="1776.8" y="173.5" font-family="Liberation Sans" font-size="19" fill="#11dd11" stroke="#11dd11" stroke-width="0.6">Y</text>
 <text x="1860.3" y="268.2" font-family="Liberation Sans" font-size="20" fill="#ee1111" stroke="#ee1111" stroke-width="0.6" textLength="10" lengthAdjust="spacingAndGlyphs">X</text>
 <text x="1860.8" y="169.6" font-family="Liberation Sans" font-size="16" fill="#1a1aee" stroke="#1a1aee" stroke-width="0.5">Z</text>
 <path d="M1888.5 251.5H1905.5V255.5L1897 264.5L1888.5 255.5Z" fill="#fdfdfd" stroke="#888" stroke-width="1.1" stroke-linejoin="round"/>
 <path d="M1889 255.5H1905" stroke="#888" stroke-width="1"/>
</svg>

<!-- NAV BAR -->
<div class="abs" style="left:806px;top:1060px;width:309px;height:22px;background:#f0f0f0"></div>
<svg class="abs" style="left:806px;top:1060px" width="309" height="20" viewBox="806 1060 309 20">
 <g fill="none" stroke="#4a4a4a" stroke-width="1.2">
  <path d="M820.5 1080V1068"/>
  <ellipse cx="820.5" cy="1076" rx="9" ry="3.2"/>
 </g>
 <path d="M815.5 1070.5L820.5 1065L825.5 1070.5H822.5V1076H818.5V1070.5Z" fill="#f2f2f2" stroke="#4a4a4a" stroke-width="1.1"/>
 <path d="M854.5 1080V1070.5L858 1068L866 1066V1068.5H872V1080Z" fill="#cfd3d8" stroke="#6a6e74" stroke-width="1.1"/>
 <rect x="857" y="1071.5" width="13" height="9" fill="#8e97a4" stroke="#555c66" stroke-width="1"/>
 <path d="M889 1080C888 1077 887.5 1074.5 888.5 1073.5C889.5 1072.5 891 1074 892 1075.5V1068C892 1066.5 894 1066.5 894 1068V1066C894 1064.7 896.3 1064.7 896.3 1066V1066.5C896.3 1065.3 898.5 1065.3 898.5 1066.7V1068C898.5 1066.8 900.8 1066.8 900.8 1068.2V1074C902 1073 904 1073 904.5 1074.5C903.5 1076 902.5 1078 902 1080" fill="#fafafa" stroke="#555" stroke-width="1"/>
 <g fill="none" stroke="#555" stroke-width="1.2">
  <circle cx="929" cy="1072.5" r="7.2"/>
  <circle cx="962.5" cy="1072.5" r="7.2"/>
  <path d="M955 1066V1065.5H975V1080" stroke-dasharray="2 2" stroke-width="1"/>
  <path d="M936 1066H942M939 1063V1069" stroke-width="1.1"/>
 </g>
 <circle cx="929" cy="1072.5" r="6.2" fill="#e6f4f8" opacity="0.7"/>
 <circle cx="962.5" cy="1072.5" r="6.2" fill="#e6f4f8" opacity="0.7"/>
 <path d="M934 1077.5L938 1081.5M967.5 1077.5L971.5 1081.5" stroke="#333" stroke-width="2.6"/>
 <rect x="998.8" y="1065.8" width="19" height="15" rx="1.5" fill="#f4f4f4" stroke="#555" stroke-width="1.1"/>
 <rect x="1001" y="1068" width="14.6" height="12" fill="#7aa3d8" stroke="#4f76ad" stroke-width="0.8"/>
 <g stroke="#777" stroke-width="0.9" fill="none"><path d="M1039 1066.5H1058M1039 1069.5H1058M1039 1072.5H1058M1039 1075.5H1058M1039 1078.5H1058M1039 1066.5V1080M1042.2 1066.5V1080M1045.4 1066.5V1080M1048.6 1066.5V1080M1051.8 1066.5V1080M1055 1066.5V1080M1058 1066.5V1080"/></g>
 <rect x="1079.5" y="1067" width="19" height="14" fill="#6f9bd8" stroke="#5f8cc8" stroke-width="1"/>
 <path d="M1089 1067V1081M1079.5 1073.8H1098.5" stroke="#dfe8f3" stroke-width="1.3"/>
 <path d="M837.5 1072.5H845L841.25 1077.5Z M982.5 1072.5H990L986.25 1077.5Z M1021.7 1072.5H1029.2L1025.45 1077.5Z M1061.7 1072.5H1069.2L1065.45 1077.5Z M1102.5 1072.5H1110L1106.25 1077.5Z" fill="#222"/>
</svg>

<!-- CALLOUT -->
<div class="abs" style="left:64px;top:818.5px;width:459px;height:222px;background:#b0fca4;border-radius:10px"></div>
<div class="abs" style="left:64px;top:836px;width:459px;text-align:center;font-weight:bold;font-size:44px;line-height:61px;color:#000;-webkit-text-stroke:0.9px #000">
 <div class="m" style="transform:scaleX(1.055);transform-origin:center">Sketch a circle on</div>
 <div class="m" style="transform:scaleX(1.065);transform-origin:center">the inner face of</div>
 <div class="m" style="transform:scaleX(1.095);transform-origin:center">the cap&#8217;s head</div>
</div>

<!-- ARROW -->
<svg class="abs" style="left:280px;top:580px" width="300" height="240" viewBox="280 580 300 240">
 <path d="M321.5 795C319.5 730 344 688 384 663.5C419 642 455 634.8 492 634.8" fill="none" stroke="#000" stroke-width="10.8" stroke-linecap="butt"/>
 <path d="M316.1 790L321.8 800.5L326.9 790Z" fill="#000"/>
 <path d="M493.5 616.5L537 638.8L493.5 660.5Z" fill="#000" stroke="#000" stroke-width="16" stroke-linejoin="round"/>
</svg>

</body></html>
